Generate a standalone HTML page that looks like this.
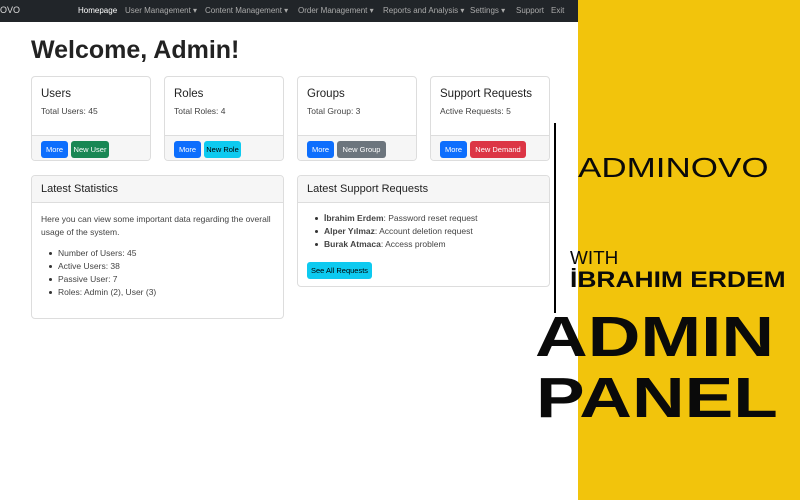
<!DOCTYPE html>
<html><head><meta charset="utf-8"><style>
*{margin:0;padding:0;box-sizing:border-box}
body{width:800px;height:500px;overflow:hidden;background:#fff;font-family:"Liberation Sans",sans-serif;position:relative;color:#212529}
.nav{position:absolute;left:0;top:0;width:578px;height:22px;background:#212529;color:#aaa;font-size:8px}
.nav span{position:absolute;top:6px;white-space:nowrap}
.yellow{position:absolute;left:578px;top:0;width:222px;height:500px;background:#f2c40c}
h1{position:absolute;left:31px;top:36px;font-size:25px;font-weight:bold;color:#222}
.card{position:absolute;top:76px;width:120px;height:85px;border:1px solid #ddd;border-radius:4px;overflow:hidden}
.card h3{font-size:11.5px;font-weight:normal;position:absolute;left:9px;top:11px;color:#222}
.card p{font-size:8.5px;position:absolute;left:9px;top:29px;color:#444}
.card .f{position:absolute;left:0;top:58px;width:100%;height:27px;background:#f6f6f6;border-top:1px solid #ddd}
.b{position:absolute;top:5px;height:17px;font-size:7.5px;color:#fff;border-radius:3px;line-height:17px;text-align:center}
.panel{position:absolute;border:1px solid #ddd;border-radius:4px;overflow:hidden;font-size:8.5px;color:#444}
.panel .h{height:27px;background:#f6f6f6;border-bottom:1px solid #ddd;font-size:11px;color:#222;padding:7px 9px}
ul{padding-left:0;list-style:none}
li{position:relative;padding-left:17px;line-height:13px}
li:before{content:"";position:absolute;left:8px;top:5px;width:3px;height:3px;border-radius:50%;background:#333}
.big{position:absolute;font-weight:900;color:#0a0a0a;white-space:nowrap;transform-origin:0 0}
</style></head><body>
<div class="nav">
<span style="left:0;color:#ddd;font-size:9px;top:5px">OVO</span>
<span style="left:78px;color:#fff">Homepage</span>
<span style="left:125px">User Management ▾</span>
<span style="left:205px">Content Management ▾</span>
<span style="left:298px">Order Management ▾</span>
<span style="left:383px">Reports and Analysis ▾</span>
<span style="left:470px">Settings ▾</span>
<span style="left:516px">Support</span>
<span style="left:551px">Exit</span>
</div>
<div class="yellow"></div>
<h1>Welcome, Admin!</h1>

<div class="card" style="left:31px"><h3>Users</h3><p>Total Users: 45</p><div class="f"><div class="b" style="left:9px;width:27px;background:#0d6efd">More</div><div class="b" style="left:39px;width:38px;background:#198754">New User</div></div></div>
<div class="card" style="left:164px"><h3>Roles</h3><p>Total Roles: 4</p><div class="f"><div class="b" style="left:9px;width:27px;background:#0d6efd">More</div><div class="b" style="left:39px;width:37px;background:#0dcaf0;color:#000">New Role</div></div></div>
<div class="card" style="left:297px"><h3>Groups</h3><p>Total Group: 3</p><div class="f"><div class="b" style="left:9px;width:27px;background:#0d6efd">More</div><div class="b" style="left:39px;width:49px;background:#6c757d">New Group</div></div></div>
<div class="card" style="left:430px"><h3>Support Requests</h3><p>Active Requests: 5</p><div class="f"><div class="b" style="left:9px;width:27px;background:#0d6efd">More</div><div class="b" style="left:39px;width:56px;background:#dc3545">New Demand</div></div></div>

<div class="panel" style="left:31px;top:175px;width:253px;height:144px"><div class="h">Latest Statistics</div>
<p style="padding:10px 9px 8px;line-height:13px">Here you can view some important data regarding the overall usage of the system.</p>
<ul style="padding-left:9px"><li>Number of Users: 45</li><li>Active Users: 38</li><li>Passive User: 7</li><li>Roles: Admin (2), User (3)</li></ul></div>

<div class="panel" style="left:297px;top:175px;width:253px;height:112px"><div class="h">Latest Support Requests</div>
<ul style="padding-top:9px;padding-left:9px"><li><b>İbrahim Erdem</b>: Password reset request</li><li><b>Alper Yılmaz</b>: Account deletion request</li><li><b>Burak Atmaca</b>: Access problem</li></ul>
<div class="b" style="left:9px;top:86px;width:65px;background:#0dcaf0;color:#000">See All Requests</div></div>

<div style="position:absolute;left:554px;top:123px;width:2px;height:190px;background:#000"></div>
<div class="big" style="left:578px;top:152px;font-size:28px;font-weight:normal;transform:scaleX(1.25)">ADMINOVO</div>
<div class="big" style="left:570px;top:248px;font-size:18px;font-weight:normal;transform:scaleX(1.05)">WITH</div>
<div class="big" style="left:570px;top:267px;font-size:22px;transform:scaleX(1.2)">İBRAHIM ERDEM</div>
<div class="big" style="left:535px;top:304px;font-size:57px;transform:scaleX(1.28)">ADMIN</div>
<div class="big" style="left:536px;top:365px;font-size:57px;transform:scaleX(1.28)">PANEL</div>
</body></html>
